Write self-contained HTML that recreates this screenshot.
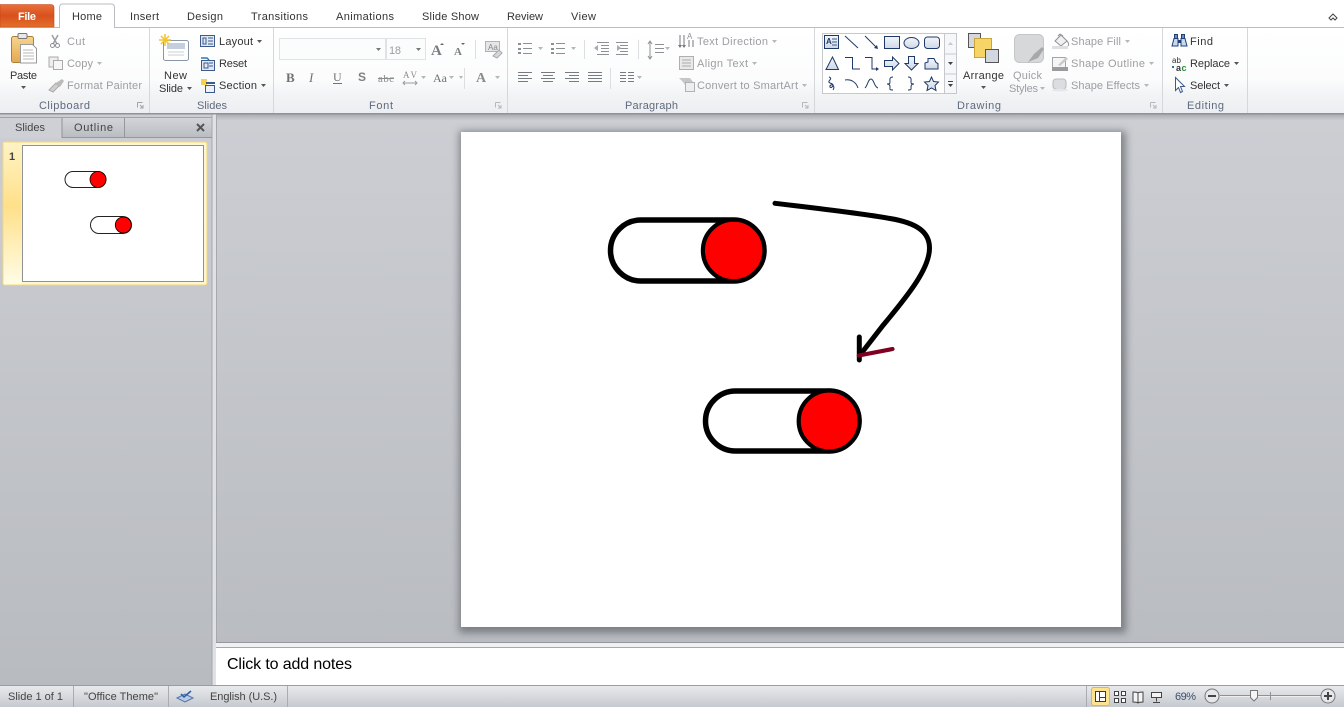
<!DOCTYPE html>
<html><head><meta charset="utf-8"><title>PowerPoint</title>
<style>
html,body{margin:0;padding:0;width:1344px;height:707px;overflow:hidden;background:#c5c8cd}
svg{display:block;position:absolute;left:0;top:0}
text{font-family:"Liberation Sans",sans-serif;font-size:11px;fill:#333;white-space:pre}
.d{fill:#9c9ea2}
.g{fill:#5f6a7e}
.t{fill:#444}
.i{fill:none;stroke:#1f3a68;stroke-width:1}
.a{fill:#555}
.da{fill:#b5b7ba}
</style></head><body>
<svg width="1344" height="707" viewBox="0 0 1344 707" xmlns="http://www.w3.org/2000/svg">
<defs>
<linearGradient id="rib" x1="0" y1="0" x2="0" y2="1"><stop offset="0" stop-color="#fff"/><stop offset=".6" stop-color="#fbfcfc"/><stop offset=".8" stop-color="#f2f3f5"/><stop offset="1" stop-color="#eceef1"/></linearGradient>
<linearGradient id="file" x1="0" y1="0" x2="0" y2="1"><stop offset="0" stop-color="#e8703a"/><stop offset=".5" stop-color="#d9501c"/><stop offset="1" stop-color="#e2702c"/></linearGradient>
<linearGradient id="bg" x1="0" y1="0" x2="0" y2="1"><stop offset="0" stop-color="#ccced3"/><stop offset="1" stop-color="#b8bbc0"/></linearGradient>
<linearGradient id="stat" x1="0" y1="0" x2="0" y2="1"><stop offset="0" stop-color="#e9ebee"/><stop offset="1" stop-color="#c6c9ce"/></linearGradient>
<linearGradient id="sel" x1="0" y1="0" x2="0" y2="1"><stop offset="0" stop-color="#fff3c4"/><stop offset=".45" stop-color="#ffe08a"/><stop offset="1" stop-color="#fffde6"/></linearGradient>
<linearGradient id="tab2" x1="0" y1="0" x2="0" y2="1"><stop offset="0" stop-color="#d3d5d9"/><stop offset="1" stop-color="#b9bcc1"/></linearGradient>
<linearGradient id="ic" x1="0" y1="0" x2="0" y2="1"><stop offset="0" stop-color="#f3f6fa"/><stop offset="1" stop-color="#cdd8e6"/></linearGradient>
<linearGradient id="clip" x1="0" y1="0" x2="0" y2="1"><stop offset="0" stop-color="#f7d58e"/><stop offset="1" stop-color="#e5a84f"/></linearGradient>
<linearGradient id="tsh" x1="0" y1="0" x2="0" y2="1"><stop offset="0" stop-color="#8f9297" stop-opacity=".55"/><stop offset="1" stop-color="#8f9297" stop-opacity="0"/></linearGradient>
<filter id="sh" x="-5%" y="-5%" width="110%" height="110%"><feGaussianBlur stdDeviation="4"/></filter>
</defs>

<!-- top tabs -->
<rect x="0" y="0" width="1344" height="28" fill="#fff"/>
<rect x="0" y="27" width="1344" height="1" fill="#babdc2"/>
<path d="M0 4.500H51a3 3 0 0 1 3 3V27H0Z" fill="url(#file)" stroke="#c2441a" stroke-width=".6"/>
<text x="18" y="20" textLength="18" style="fill:#fff;font-weight:bold" lengthAdjust="spacing">File</text>
<path d="M59.500 28V7a3 3 0 0 1 3-3h49a3 3 0 0 1 3 3V27" fill="#fff" stroke="#b9bcc1"/>
<rect x="60" y="26" width="54" height="3" fill="#fff"/>
<text x="72" y="20" textLength="30">Home</text>
<text x="130" y="20" textLength="29">Insert</text>
<text x="187" y="20" textLength="36">Design</text>
<text x="251" y="20" textLength="57">Transitions</text>
<text x="336" y="20" textLength="58">Animations</text>
<text x="422" y="20" textLength="57">Slide Show</text>
<text x="507" y="20" textLength="36">Review</text>
<text x="571" y="20" textLength="25">View</text>
<path d="M1329 18l4-4 4 4-2 2-2-2-2 2z" fill="none" stroke="#444" stroke-width="1"/>

<!-- ribbon -->
<rect x="0" y="28" width="1344" height="85" fill="url(#rib)"/>
<rect x="60" y="27" width="54" height="2" fill="#fff"/>
<rect x="0" y="113" width="1344" height="1.500" fill="#8f9297"/>
<g fill="#d5d7db"><rect x="149" y="28" width="1" height="85"/><rect x="273" y="28" width="1" height="85"/><rect x="507" y="28" width="1" height="85"/><rect x="814" y="28" width="1" height="85"/><rect x="1162" y="28" width="1" height="85"/><rect x="1247" y="28" width="1" height="85"/></g>

<!-- Clipboard -->
<rect x="11.500" y="36.500" width="22" height="26" rx="2" fill="url(#clip)" stroke="#a9803f"/>
<rect x="18" y="33.500" width="9" height="5" rx="1" fill="#e9e9e9" stroke="#777"/>
<path d="M20.500 44.500h12l4 4v14.500h-16z" fill="#fff" stroke="#9a9a9a"/>
<path d="M23 50h10M23 53h11M23 56h11M23 59h11" stroke="#b8b8b8"/>
<text x="10" y="79" textLength="27">Paste</text>
<path d="M21 86h5l-2.500 3z" class="a"/>
<path d="M52 35l5 9M58 35l-5 9" stroke="#9ba0a6" stroke-width="1.500"/><circle cx="52.500" cy="45.500" r="2" fill="none" stroke="#8a8e94"/><circle cx="57.500" cy="45.500" r="2" fill="none" stroke="#8a8e94"/>
<text x="67" y="45" textLength="18" class="d">Cut</text>
<rect x="49" y="57" width="9" height="10" fill="#eee" stroke="#aaa"/><rect x="53.500" y="60.500" width="9" height="9" fill="#f6f6f6" stroke="#aaa"/>
<text x="67" y="67" textLength="26" class="d">Copy</text><path d="M97 62h5l-2.500 3z" class="da"/>
<path d="M49 90l7-7 3 3-6 6z" fill="#cfcfcf" stroke="#aaa"/><path d="M56 83l6-4 2 2-4 6z" fill="#bbb"/>
<text x="67" y="89" textLength="75" class="d">Format Painter</text>
<text x="39" y="109" textLength="51" class="g">Clipboard</text>
<path d="M137.500 102.500h5M137.500 102.500v5M140 105l3 3M143 105v3h-3" fill="none" stroke="#a0a3a8"/>

<!-- Slides -->
<rect x="163.500" y="40.500" width="25" height="20" rx="2" fill="#fff" stroke="#8a97a8"/>
<rect x="167" y="43" width="18" height="6" fill="#c3cfde"/><path d="M168 52h16M168 55h16" stroke="#c9ccd1"/>
<path d="M165 34v12M159 40h12M161 36l8 8M169 36l-8 8" stroke="#f4c430" stroke-width="1.500"/>
<text x="164" y="79" textLength="23">New</text>
<text x="159" y="92" textLength="24">Slide</text>
<path d="M187 87h5l-2.500 3z" class="a"/>
<rect x="200.500" y="35.500" width="14" height="11" fill="#dfe8f3" stroke="#3c5a8c"/><path d="M203 38v6h3v-6zM208 38h5M208 41h5M208 44h5" fill="none" stroke="#3c5a8c"/>
<text x="219" y="45" textLength="34">Layout</text><path d="M257 40h5l-2.500 3z" class="a"/>
<rect x="201.500" y="60.500" width="13" height="10" fill="#dfe8f3" stroke="#3c5a8c"/><path d="M204 63h4v5h-4zM209 63h4M209 66h4" fill="none" stroke="#3c5a8c"/><path d="M201 58h6l2 2" fill="none" stroke="#2a7ab8" stroke-width="1.500"/>
<text x="219" y="67" textLength="28">Reset</text>
<rect x="201" y="79" width="6" height="6" fill="#f6cf55"/><rect x="205.500" y="85.500" width="9" height="7" fill="#eef2f7" stroke="#3c5a8c"/><rect x="206" y="82" width="9" height="2" fill="#3c5a8c"/>
<text x="219" y="89" textLength="38">Section</text><path d="M261 84h5l-2.500 3z" class="a"/>
<text x="197" y="109" textLength="30" class="g">Slides</text>

<!-- Font -->
<rect x="279.500" y="38.500" width="106" height="21" fill="#fbfcfc" stroke="#e0e3e6"/>
<rect x="386.500" y="38.500" width="39" height="21" fill="#fbfcfc" stroke="#e0e3e6"/>
<path d="M376 48h5l-2.500 3zM416 48h5l-2.500 3z" fill="#777"/>
<text x="389" y="54" textLength="12" class="d">18</text>
<text x="431" y="55" style="font-family:'Liberation Serif',serif;font-weight:bold;font-size:15px;fill:#7b7d80">A</text><path d="M440 45l2-2 2 2" fill="#666"/>
<text x="454" y="55" style="font-family:'Liberation Serif',serif;font-weight:bold;font-size:11px;fill:#7b7d80">A</text><path d="M461 43l2 2 2-2" fill="#666"/>
<rect x="475" y="40" width="1" height="19" fill="#dcdee1"/>
<rect x="485.500" y="41.500" width="14" height="10" fill="#e4e6e9" stroke="#b0b2b6"/><text x="488" y="50" style="font-size:8px;fill:#888">Aa</text><path d="M493 56l6-6 3 3-5 5z" fill="#d6d8dc" stroke="#a8aaae"/>
<text x="286" y="82" style="font-family:'Liberation Serif',serif;font-weight:bold;font-size:13px;fill:#6f7175">B</text>
<text x="309" y="82" style="font-family:'Liberation Serif',serif;font-style:italic;font-size:13px;fill:#6f7175">I</text>
<text x="333" y="81" style="font-family:'Liberation Serif',serif;font-size:12px;fill:#6f7175">U</text><rect x="333" y="83" width="9" height="1" fill="#6f7175"/>
<text x="358" y="81" style="font-weight:bold;font-size:12px;fill:#7e8084">S</text>
<text x="378" y="82" textLength="16" style="font-family:'Liberation Serif',serif;font-size:11px;fill:#8a8c90">abc</text><rect x="378" y="78" width="16" height="1" fill="#8a8c90"/>
<text x="403" y="78" textLength="14" style="font-family:'Liberation Serif',serif;font-size:9px;fill:#8a8c90">AV</text><path d="M403 83h14M405 81l-2 2 2 2M415 81l2 2-2 2" fill="none" stroke="#9a9c9f"/>
<path d="M421 76h5l-2.500 3z" class="da"/>
<text x="433" y="82" style="font-family:'Liberation Serif',serif;font-size:12px;fill:#6f7175">Aa</text><path d="M449 76h5l-2.500 3z" class="da"/>
<path d="M459 76h4l-2 3z" class="da"/>
<rect x="464" y="68" width="1" height="21" fill="#dcdee1"/>
<text x="476" y="82" style="font-family:'Liberation Serif',serif;font-weight:bold;font-size:14px;fill:#8a8c90">A</text><path d="M495 76h5l-2.500 3z" class="da"/>
<text x="369" y="109" textLength="24" class="g">Font</text>
<path d="M495.500 102.500h5M495.500 102.500v5M498 105l3 3M501 105v3h-3" fill="none" stroke="#b5b7ba"/>

<!-- Paragraph -->
<g fill="#8d9095"><rect x="518" y="43" width="3" height="2"/><rect x="518" y="48" width="3" height="2"/><rect x="518" y="52" width="3" height="2"/><rect x="551" y="43" width="3" height="2"/><rect x="551" y="48" width="3" height="2"/><rect x="551" y="52" width="3" height="2"/></g>
<path d="M523 43.500h9M523 48.500h9M523 53.500h9M556 43.500h9M556 48.500h9M556 53.500h9" stroke="#8d9095"/>
<path d="M538 47h5l-2.500 3zM571 47h5l-2.500 3z" class="da"/>
<rect x="584" y="40" width="1" height="19" fill="#dcdee1"/>
<path d="M597 42.500h12M601 45.500h8M601 48.500h8M601 51.500h8M597 54.500h12M616 42.500h12M620 45.500h8M620 48.500h8M620 51.500h8M616 54.500h12" stroke="#8d9095"/>
<path d="M594 48l4-3v6zM617 45l4 3-4 3z" fill="#a8aaae"/>
<rect x="638" y="40" width="1" height="19" fill="#dcdee1"/>
<path d="M650 42v16M648 44l2-3 2 3M648 56l2 3 2-3" fill="none" stroke="#8d9095"/>
<path d="M655 44.500h9M655 48.500h9M655 52.500h9" stroke="#8d9095"/><path d="M665 47h5l-2.500 3z" class="da"/>
<path d="M518 72.500h14M518 75.500h10M518 78.500h14M518 81.500h10M541 72.500h14M543 75.500h10M541 78.500h14M543 81.500h10M565 72.500h14M569 75.500h10M565 78.500h14M569 81.500h10M588 72.500h14M588 75.500h14M588 78.500h14M588 81.500h14" stroke="#777a7f"/>
<rect x="610" y="68" width="1" height="21" fill="#dcdee1"/>
<path d="M620 72.500h6M620 75.500h6M620 78.500h6M620 81.500h6M628 72.500h6M628 75.500h6M628 78.500h6M628 81.500h6" stroke="#777a7f"/><path d="M637 76h5l-2.500 3z" class="da"/>
<path d="M680 35v12M684 35v12M689 40v7M693 40v7" stroke="#75787d"/><path d="M678 45l2 3 2-3M682 45l2 3 2-3" fill="#75787d"/>
<text x="687" y="39" style="font-size:8px;fill:#8d9095">A</text>
<text x="697" y="45" textLength="71" class="d">Text Direction</text><path d="M772 40h5l-2.500 3z" class="da"/>
<rect x="679.500" y="56.500" width="14" height="13" fill="#e9e9ea" stroke="#adafb2"/><path d="M682 60h9M682 63h9M682 66h9" stroke="#a9abae"/>
<text x="697" y="67" textLength="51" class="d">Align Text</text><path d="M752 62h5l-2.500 3z" class="da"/>
<path d="M679 78h11l3 4v3h-8l-2-3z" fill="#c4c6c9"/><rect x="685.500" y="82.500" width="9" height="9" fill="#eee" stroke="#b0b2b6"/>
<text x="697" y="89" textLength="101" class="d">Convert to SmartArt</text><path d="M802 84h5l-2.500 3z" class="da"/>
<text x="625" y="109" textLength="53" class="g">Paragraph</text>
<path d="M802.500 102.500h5M802.500 102.500v5M805 105l3 3M808 105v3h-3" fill="none" stroke="#b5b7ba"/>

<!-- Drawing gallery -->
<rect x="822.500" y="33.500" width="134" height="60" fill="#fff" stroke="#c5c8cc"/>
<rect x="944.500" y="33.500" width="12" height="60" fill="#f6f7f8" stroke="#c5c8cc"/>
<path d="M944 54h13M944 74h13" stroke="#c5c8cc"/>
<path d="M948 45l2.500-3 2.500 3z" fill="#c5c8cc"/><path d="M948 62h5l-2.500 3z" fill="#444"/><path d="M948 81h5v1h-5zM948 84h5l-2.500 3z" fill="#444"/>
<rect x="824.500" y="35.500" width="14" height="13" fill="url(#ic)" stroke="#1f3a68"/><text x="826" y="44" style="font-size:8px;font-weight:bold;fill:#1f3a68">A</text><path d="M832 39h5M832 42h5M832 45h5" stroke="#3c5a8c"/>
<path d="M845 36l13 12" class="i"/>
<path d="M865 36l12 12" class="i"/><path d="M874 48l4 1-1-4z" fill="#1f3a68"/>
<rect x="884.500" y="36.500" width="15" height="12" fill="url(#ic)" stroke="#1f3a68"/>
<ellipse cx="911.500" cy="43" rx="7.500" ry="5.500" fill="url(#ic)" stroke="#1f3a68"/>
<rect x="924.500" y="37" width="15" height="11.500" rx="3" fill="url(#ic)" stroke="#1f3a68"/>
<path d="M832.500 57l6 12.500h-12.500z" fill="url(#ic)" stroke="#1f3a68"/>
<path d="M845 57.500h7.500v11.500h7.500" class="i"/>
<path d="M865 57.500h7v11.500h4" class="i"/><path d="M876 67l3 2-3 2z" fill="#1f3a68"/>
<path d="M884.500 60.500h8v-3.500l6.500 6.500-6.500 6.500v-3.500h-8z" fill="url(#ic)" stroke="#1f3a68"/>
<path d="M908.500 56.500h6v7h3.500l-6.500 6.500-6.500-6.500h3.500z" fill="url(#ic)" stroke="#1f3a68"/>
<path d="M928 58.500h6l2 4 2 1v5.500h-13v-6l3-1z" fill="url(#ic)" stroke="#1f3a68"/>
<path d="M829 77c5 2-3 4 1 6 3 1 4 2 2 4s-3-1-1-2 4 2 2 5" class="i"/>
<path d="M845 80c6-1 11 2 13 8" class="i"/>
<path d="M865 88c3-3 3-9 6-9s3 8 7 9" class="i"/>
<path d="M893 77c-4 0-3 3-3 5s-1 2-3 2c2 0 3 1 3 3s-1 3 3 3" class="i"/>
<path d="M908 77c4 0 3 3 3 5s1 2 3 2c-2 0-3 1-3 3s1 3-3 3" class="i"/>
<path d="M931.500 77l2 4.500 5 .5-3.500 3.500 1 5-4.500-2.500-4.500 2.500 1-5-3.500-3.500 5-.5z" fill="url(#ic)" stroke="#1f3a68"/>

<!-- Arrange -->
<rect x="968.500" y="33.500" width="12" height="14" fill="#d3d8e0" stroke="#555"/>
<rect x="974.500" y="38.500" width="17" height="19" fill="#f6d566" stroke="#c9a53a"/>
<rect x="985.500" y="49.500" width="13" height="13" fill="#d3d8e0" stroke="#555"/>
<text x="963" y="79" textLength="41">Arrange</text>
<path d="M981 86h5l-2.500 3z" class="a"/>
<rect x="1014.500" y="34.500" width="29" height="28" rx="5" fill="#d7d8da" stroke="#c5c6c8"/>
<path d="M1028 62l6-8 8-7 2 2-6 9z" fill="#a6a8ab"/>
<text x="1013" y="79" textLength="29" class="d">Quick</text>
<text x="1009" y="92" textLength="29" class="d">Styles</text><path d="M1040 87h5l-2.500 3z" class="da"/>
<path d="M1055 41l6-6 6 6-6 5z" fill="#f0f0f0" stroke="#8f9195"/><path d="M1058 36l2-2 3 2" fill="none" stroke="#8f9195"/><path d="M1067 41c2 2 2 4 1 5" stroke="#8f9195" fill="none"/><rect x="1052" y="46" width="16" height="3" fill="#dedfe1"/>
<text x="1071" y="45" textLength="50" class="d">Shape Fill</text><path d="M1125 40h5l-2.500 3z" class="da"/>
<rect x="1052.500" y="57.500" width="13" height="10" fill="#f5f5f5" stroke="#a3a5a9"/><path d="M1058 65l8-8 2 2-8 7z" fill="#c8c9cb"/><rect x="1052" y="67" width="16" height="4" fill="#9a9b9d"/>
<text x="1071" y="67" textLength="74" class="d">Shape Outline</text><path d="M1149 62h5l-2.500 3z" class="da"/>
<rect x="1053" y="79" width="13" height="10" rx="3" fill="#dcdde0" stroke="#b9babc"/><ellipse cx="1060" cy="90" rx="8" ry="1.500" fill="#e5e6e8"/>
<text x="1071" y="89" textLength="69" class="d">Shape Effects</text><path d="M1144 84h5l-2.500 3z" class="da"/>
<text x="957" y="109" textLength="44" class="g">Drawing</text>
<path d="M1150.500 102.500h5M1150.500 102.500v5M1153 105l3 3M1156 105v3h-3" fill="none" stroke="#b5b7ba"/>

<!-- Editing -->
<rect x="1174.500" y="34.500" width="3" height="4" fill="#6f8fc0" stroke="#21407a"/><rect x="1181.500" y="34.500" width="3" height="4" fill="#6f8fc0" stroke="#21407a"/>
<path d="M1174 38.500l-2 7.500h6v-7.500zM1181 38.500v7.500h6l-2-7.500z" fill="#c9d8ee" stroke="#21407a"/><rect x="1178" y="40" width="3" height="3" fill="#21407a"/>
<text x="1190" y="45" textLength="23">Find</text>
<text x="1172" y="63" style="font-size:8px;fill:#333">ab</text><text x="1176" y="71" style="font-size:9px;font-weight:bold;fill:#333">a</text><text x="1181.500" y="71" style="font-size:9px;font-weight:bold;fill:#2a8a3a">c</text>
<rect x="1172" y="66" width="2" height="2" fill="#2a6fb0"/>
<text x="1190" y="67" textLength="40">Replace</text><path d="M1234 62h5l-2.500 3z" class="a"/>
<path d="M1175.500 77.500v13l3-3 2 5 2-1-2-5h4z" fill="#fff" stroke="#3c5a8c"/>
<text x="1190" y="89" textLength="30">Select</text><path d="M1224 84h5l-2.500 3z" class="a"/>
<text x="1187" y="109" textLength="37" class="g">Editing</text>

<!-- Work area -->
<rect x="0" y="114.500" width="1344" height="571" fill="url(#bg)"/>
<rect x="217" y="114.500" width="1127" height="6" fill="url(#tsh)"/>
<rect x="212" y="114.500" width="4" height="571" fill="#dfe1e4"/>
<rect x="211.500" y="114.500" width="1" height="571" fill="#a5a8ad"/>
<rect x="216" y="114.500" width="1" height="571" fill="#a5a8ad"/>

<!-- side tabs -->
<rect x="0" y="117.500" width="211.500" height="20" fill="url(#tab2)"/>
<rect x="0" y="117" width="211.500" height="1" fill="#9fa2a7"/>
<rect x="0" y="118" width="61.500" height="20" fill="#ced0d5"/>
<rect x="61.500" y="118" width="1" height="20" fill="#8f9297"/>
<rect x="124" y="118" width="1" height="20" fill="#94979c"/>
<rect x="62" y="137" width="150" height="1" fill="#94979c"/>
<text x="15" y="131" textLength="30" class="t">Slides</text>
<text x="74" y="131" textLength="39" class="t">Outline</text>
<path d="M197 124l7 7M204 124l-7 7" stroke="#555" stroke-width="2"/>

<!-- thumbnail -->
<rect x="3" y="142" width="204" height="143" rx="2" fill="#fdf6d4" stroke="#f4d77a"/>
<rect x="3.500" y="142.500" width="18" height="142" fill="url(#sel)"/>
<rect x="22.500" y="145.500" width="181" height="136" fill="#fff" stroke="#8e9196"/>
<text x="9" y="160" style="font-weight:bold;font-size:11px;fill:#444">1</text>
<rect x="65" y="171.500" width="41" height="16" rx="8" fill="#fff" stroke="#222"/>
<circle cx="98" cy="179.500" r="8" fill="#f00" stroke="#000" stroke-width=".8"/>
<rect x="90.500" y="216.500" width="41" height="17" rx="8.500" fill="#fff" stroke="#222"/>
<circle cx="123.300" cy="225" r="8" fill="#f00" stroke="#000" stroke-width=".8"/>

<!-- slide -->
<rect x="459" y="131" width="667" height="502" fill="#50545a" opacity=".6" filter="url(#sh)"/>
<rect x="461" y="132" width="660" height="495" fill="#fff"/>
<rect x="610.500" y="220" width="153.500" height="61" rx="30.500" fill="#fff" stroke="#000" stroke-width="5.500"/>
<circle cx="733.700" cy="250.500" r="30.800" fill="#f00" stroke="#000" stroke-width="4.200"/>
<rect x="705.500" y="391" width="153.500" height="60" rx="30" fill="#fff" stroke="#000" stroke-width="5.500"/>
<circle cx="829.200" cy="421" r="30.500" fill="#f00" stroke="#000" stroke-width="4.200"/>
<path d="M775 203.300C810 207.500 860 213 890 218.500C917 223 929.500 232 929.500 248C929.500 268 910 293 883.300 325L860 355" fill="none" stroke="#000" stroke-width="5" stroke-linecap="round"/>
<path d="M859.300 337V360" fill="none" stroke="#000" stroke-width="5" stroke-linecap="round"/>
<path d="M858.800 355.500L892.500 349" fill="none" stroke="#7f0020" stroke-width="4.200" stroke-linecap="round"/>

<!-- notes -->
<rect x="216" y="642" width="1128" height="1" fill="#94979c"/>
<rect x="216" y="643" width="1128" height="4" fill="#eef0f2"/>
<rect x="216" y="647" width="1128" height="38" fill="#fff"/>
<rect x="216" y="647" width="1128" height="1" fill="#a5a8ad"/>
<text x="227" y="669" textLength="125" style="font-size:16px;fill:#000">Click to add notes</text>

<!-- status -->
<rect x="0" y="685" width="1344" height="22" fill="url(#stat)"/>
<rect x="0" y="685" width="1344" height="1" fill="#9a9da2"/>
<g fill="#a9acb1"><rect x="73" y="686" width="1" height="21"/><rect x="168" y="686" width="1" height="21"/><rect x="287" y="686" width="1" height="21"/><rect x="1086" y="686" width="1" height="21"/></g>
<text x="8" y="700" textLength="55" class="t">Slide 1 of 1</text>
<text x="84" y="700" textLength="74" class="t">"Office Theme"</text>
<path d="M177 698l8-4 8 4-8 4z" fill="#b8cbe6" stroke="#4f73a8"/><path d="M181 694l3 3 7-6" fill="none" stroke="#2a5aa8" stroke-width="1.500"/>
<text x="210" y="700" textLength="67" class="t">English (U.S.)</text>
<rect x="1091.500" y="687.500" width="18" height="18" rx="2" fill="#fde38f" stroke="#e2b64a"/>
<rect x="1095.500" y="691.500" width="10" height="10" fill="#fff" stroke="#3a3a3a"/><path d="M1099.500 691.500v10M1099.500 697.500h6" stroke="#3a3a3a"/>
<path d="M1114.500 691.500h4v4h-4zM1121.500 691.500h4v4h-4zM1114.500 698.500h4v4h-4zM1121.500 698.500h4v4h-4z" fill="#fff" stroke="#444"/>
<path d="M1133 692c2 0 4 0 5 1 1-1 3-1 5-1v10c-2 0-4 0-5 1-1-1-3-1-5-1zM1138 693v10" fill="#f4f4f4" stroke="#444"/>
<path d="M1151.500 692.500h10v5h-10zM1156.500 697.500v4M1153 702.500h7" fill="#f4f4f4" stroke="#444" stroke-width="1"/>
<text x="1175" y="700" textLength="21" style="fill:#3d4f70">69%</text>
<circle cx="1212" cy="696" r="7" fill="#e6e7ea" stroke="#777"/><rect x="1208" y="695" width="8" height="2" fill="#444"/>
<rect x="1220" y="695" width="101" height="1" fill="#8e9196"/><rect x="1220" y="696" width="101" height="1" fill="#eceef0"/>
<rect x="1270" y="692" width="1" height="8" fill="#8e9196"/>
<path d="M1250.500 690.500h7v7l-3.500 3.500-3.500-3.500z" fill="#f4f5f6" stroke="#777"/>
<circle cx="1328" cy="696" r="7" fill="#e6e7ea" stroke="#777"/><path d="M1324 695h8v2h-8zM1327 692h2v8h-2z" fill="#444"/>
</svg>
</body></html>
